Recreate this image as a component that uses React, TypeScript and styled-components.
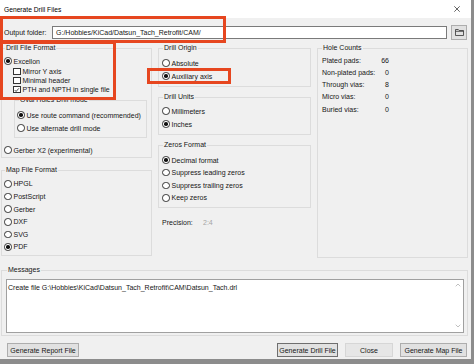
import styled, { createGlobalStyle } from 'styled-components';

const GlobalStyle = createGlobalStyle`
  html, body {
    margin: 0;
    background: #8c8c8c;
  }
  body {
    font-family: "Liberation Sans", Arial, sans-serif;
    font-size: 7px;
    color: #161616;
  }
  * {
    box-sizing: border-box;
  }
`;

const Dialog = styled.div`
  position: relative;
  width: 471px;
  height: 359px;
  background: #f0f0f0;
  display: flex;
  flex-direction: column;
`;

const TitleBar = styled.div`
  height: 18px;
  background: #fff;
  display: flex;
  align-items: center;
  justify-content: space-between;
  padding: 0 11px 0 4px;
  font-size: 6.7px;
  color: #000;
`;

const OutputRow = styled.div`
  display: flex;
  align-items: center;
  height: 16px;
  margin-top: 6px;
  padding: 0 4px;
`;

const OutputLabel = styled.span`
  width: 48px;
`;

const PathInput = styled.div`
  flex: 1;
  height: 13px;
  background: #fff;
  border: 1px solid #7a7a7a;
  padding-left: 3px;
  display: flex;
  align-items: center;
`;

const IconButton = styled.div`
  width: 16px;
  height: 15px;
  margin-left: 4px;
  background: #e1e1e1;
  border: 1px solid #adadad;
  display: flex;
  align-items: center;
  justify-content: center;
`;

const Columns = styled.div`
  display: grid;
  grid-template-columns: 151px 153px 151px;
  column-gap: 6px;
  align-items: start;
  margin-top: 3px;
  padding-left: 1px;
`;

const Column = styled.div`
  display: flex;
  flex-direction: column;
`;

const Group = styled.fieldset<{ $pad: string; $mt?: number; $ml?: number; $w?: number; $h?: number }>`
  margin: ${(p) => p.$mt ?? 0}px 0 0 ${(p) => p.$ml ?? 0}px;
  padding: ${(p) => p.$pad};
  border: 1px solid #dcdcdc;
  min-width: 0;
  ${(p) => (p.$w ? `width: ${p.$w}px;` : '')}
  ${(p) => (p.$h ? `height: ${p.$h}px;` : '')}
`;

const Legend = styled.legend<{ $ml?: number }>`
  padding: 0 1px;
  margin-left: ${(p) => p.$ml ?? 1}px;
  height: 10px;
  line-height: 10px;
`;

const OptionRow = styled.div<{ $h: number; $ml?: number; $mt?: number }>`
  display: flex;
  align-items: center;
  gap: 2px;
  height: ${(p) => p.$h}px;
  margin-left: ${(p) => p.$ml ?? 0}px;
  margin-top: ${(p) => p.$mt ?? 0}px;
  white-space: nowrap;
`;

const RadioDot = styled.span<{ $on?: boolean }>`
  width: 7.5px;
  height: 7.5px;
  border: 1px solid #333;
  border-radius: 50%;
  background: #fff;
  display: flex;
  align-items: center;
  justify-content: center;
  flex-shrink: 0;
  &::after {
    content: '';
    width: 3.5px;
    height: 3.5px;
    border-radius: 50%;
    background: ${(p) => (p.$on ? '#111' : 'transparent')};
  }
`;

const CheckBox = styled.span`
  width: 7.5px;
  height: 7.5px;
  border: 1px solid #333;
  background: #fff;
  display: flex;
  align-items: center;
  justify-content: center;
  flex-shrink: 0;
`;

const CountRow = styled.div`
  display: flex;
  justify-content: space-between;
  width: 67px;
  height: 12.25px;
  align-items: center;
  white-space: nowrap;
`;

const PrecisionRow = styled.div`
  display: flex;
  align-items: center;
  height: 10px;
  margin: 9px 0 0 4px;
`;

const PrecisionLabel = styled.span`
  width: 41px;
`;

const Muted = styled.span`
  color: #a4a4a4;
`;

const MessageGroup = styled(Group)`
  margin: 7px 3px 0 1px;
`;

const MessageBox = styled.div`
  margin-top: 4px;
  height: 54px;
  background: #fff;
  border: 1px solid #a0a0a0;
  display: flex;
`;

const MessageText = styled.div`
  flex: 1;
  padding: 2.5px 0 0 1px;
  line-height: 10px;
  white-space: nowrap;
`;

const ScrollTrack = styled.div`
  width: 10px;
  display: flex;
  flex-direction: column;
  justify-content: space-between;
  align-items: center;
  padding: 3px 0 4px;
`;

const ButtonRow = styled.div`
  display: flex;
  margin-top: 7px;
  padding: 0 4px 0 7px;
  gap: 7px;
`;

const Spacer = styled.div`
  flex: 1;
`;

const DialogButton = styled.div<{ $w: number; $variant?: 'default' | 'flat' }>`
  width: ${(p) => p.$w}px;
  height: 14px;
  display: flex;
  align-items: center;
  justify-content: center;
  background: ${(p) => (p.$variant === 'flat' ? '#e6e6e6' : '#e1e1e1')};
  border: 1px solid
    ${(p) => (p.$variant === 'default' ? '#6f6f6f' : p.$variant === 'flat' ? '#d6d6d6' : '#adadad')};
  white-space: nowrap;
`;

const Highlight = styled.div<{ $x: number; $y: number; $w: number; $h: number }>`
  position: absolute;
  left: ${(p) => p.$x}px;
  top: ${(p) => p.$y}px;
  width: ${(p) => p.$w}px;
  height: ${(p) => p.$h}px;
  border: 3px solid #e6461f;
  pointer-events: none;
`;

const Radio = ({ label, on, h, ml, mt }: { label: string; on?: boolean; h: number; ml?: number; mt?: number }) => (
  <OptionRow $h={h} $ml={ml} $mt={mt}>
    <RadioDot $on={on} />
    <span>{label}</span>
  </OptionRow>
);

const Check = ({ label, on }: { label: string; on?: boolean }) => (
  <OptionRow $h={9} $ml={9}>
    <CheckBox>
      {on && (
        <svg width="6" height="6" viewBox="0 0 6 6">
          <path d="M0.8 3.1 L2.3 4.6 L5.3 1.2" fill="none" stroke="#222" strokeWidth="0.9" />
        </svg>
      )}
    </CheckBox>
    <span>{label}</span>
  </OptionRow>
);

const holeCounts = [
  ['Plated pads:', '66'],
  ['Non-plated pads:', '0'],
  ['Through vias:', '8'],
  ['Micro vias:', '0'],
  ['Buried vias:', '0'],
];

const mapFormats = ['HPGL', 'PostScript', 'Gerber', 'DXF', 'SVG', 'PDF'];
const zeroFormats = ['Decimal format', 'Suppress leading zeros', 'Suppress trailing zeros', 'Keep zeros'];

const App = () => {
  return (
    <>
      <GlobalStyle />
      <Dialog>
        <TitleBar>
          <span>Generate Drill Files</span>
          <svg width="6" height="6" viewBox="0 0 6 6">
            <path d="M0.3 0.3 L5.7 5.7 M5.7 0.3 L0.3 5.7" stroke="#222" strokeWidth="0.7" />
          </svg>
        </TitleBar>

        <OutputRow>
          <OutputLabel>Output folder:</OutputLabel>
          <PathInput>G:/Hobbies/KiCad/Datsun_Tach_Retrofit/CAM/</PathInput>
          <IconButton>
            <svg width="9" height="7" viewBox="0 0 9 7">
              <path d="M0.5 0.5 H3.3 L4.2 1.5 H8.5 V6.5 H0.5 Z M0.5 2.3 H8.5" fill="none" stroke="#333" strokeWidth="0.8" />
            </svg>
          </IconButton>
        </OutputRow>

        <Columns>
          <Column>
            <Group $pad="2px 2px 1px">
              <Legend>Drill File Format</Legend>
              <Radio label="Excellon" on h={12} />
              <Check label="Mirror Y axis" />
              <Check label="Minimal header" />
              <Check label="PTH and NPTH in single file" on />
              <Group $pad="3.5px 2px 2.5px" $mt={1} $ml={10} $w={133}>
                <Legend $ml={2}>Oval Holes Drill mode</Legend>
                <Radio label="Use route command (recommended)" on h={13} />
                <Radio label="Use alternate drill mode" h={13} />
              </Group>
              <Radio label="Gerber X2 (experimental)" h={12} mt={6} />
            </Group>
            <Group $pad="2.7px 2px 2px" $mt={7}>
              <Legend>Map File Format</Legend>
              {mapFormats.map((f) => (
                <Radio key={f} label={f} on={f === 'PDF'} h={12.6} />
              ))}
            </Group>
          </Column>

          <Column>
            <Group $pad="3.5px 3px 3px">
              <Legend>Drill Origin</Legend>
              <Radio label="Absolute" h={13} />
              <Radio label="Auxiliary axis" on h={13} />
            </Group>
            <Group $pad="2.5px 3px 3px" $mt={5.5}>
              <Legend>Drill Units</Legend>
              <Radio label="Millimeters" h={13} />
              <Radio label="Inches" on h={13} />
            </Group>
            <Group $pad="3.7px 3px 3px" $mt={5.5}>
              <Legend>Zeros Format</Legend>
              {zeroFormats.map((z, i) => (
                <Radio key={z} label={z} on={i === 0} h={12.67} />
              ))}
            </Group>
            <PrecisionRow>
              <PrecisionLabel>Precision:</PrecisionLabel>
              <Muted>2:4</Muted>
            </PrecisionRow>
          </Column>

          <Column>
            <Group $pad="1px 4px" $h={215}>
              <Legend $ml={0}>Hole Counts</Legend>
              {holeCounts.map(([label, value]) => (
                <CountRow key={label}>
                  <span>{label}</span>
                  <span>{value}</span>
                </CountRow>
              ))}
            </Group>
          </Column>
        </Columns>

        <MessageGroup $pad="0 3px 2px 4px">
          <Legend>Messages</Legend>
          <MessageBox>
            <MessageText>Create file G:\Hobbies\KiCad\Datsun_Tach_Retrofit\CAM\Datsun_Tach.drl</MessageText>
            <ScrollTrack>
              <svg width="6" height="4" viewBox="0 0 6 4">
                <path d="M0.7 3.3 L3 1 L5.3 3.3" fill="none" stroke="#b0b0b0" strokeWidth="0.8" />
              </svg>
              <svg width="6" height="4" viewBox="0 0 6 4">
                <path d="M0.7 0.7 L3 3 L5.3 0.7" fill="none" stroke="#b0b0b0" strokeWidth="0.8" />
              </svg>
            </ScrollTrack>
          </MessageBox>
        </MessageGroup>

        <ButtonRow>
          <DialogButton $w={72}>Generate Report File</DialogButton>
          <Spacer />
          <DialogButton $w={61} $variant="default">Generate Drill File</DialogButton>
          <DialogButton $w={48} $variant="flat">Close</DialogButton>
          <DialogButton $w={67}>Generate Map File</DialogButton>
        </ButtonRow>

        <Highlight $x={0} $y={16} $w={226} $h={27} />
        <Highlight $x={0} $y={41} $w={116} $h={59} />
        <Highlight $x={147} $y={68} $w={84} $h={16} />
      </Dialog>
    </>
  );
};

export default App;
